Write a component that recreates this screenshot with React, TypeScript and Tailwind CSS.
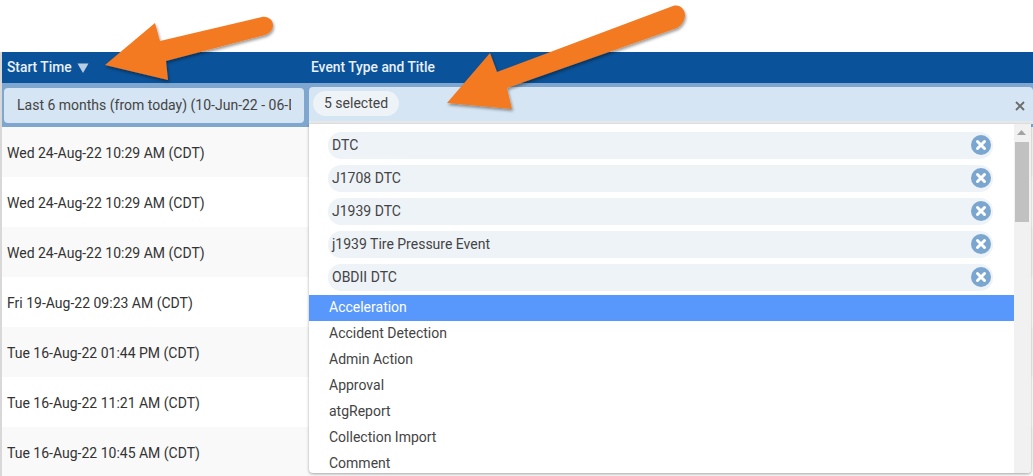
import React from 'react';

const rows = [
  'Wed 24-Aug-22 10:29 AM (CDT)',
  'Wed 24-Aug-22 10:29 AM (CDT)',
  'Wed 24-Aug-22 10:29 AM (CDT)',
  'Fri 19-Aug-22 09:23 AM (CDT)',
  'Tue 16-Aug-22 01:44 PM (CDT)',
  'Tue 16-Aug-22 11:21 AM (CDT)',
  'Tue 16-Aug-22 10:45 AM (CDT)',
];

const selected = ['DTC', 'J1708 DTC', 'J1939 DTC', 'j1939 Tire Pressure Event', 'OBDII DTC'];
const options = ['Accident Detection', 'Admin Action', 'Approval', 'atgReport', 'Collection Import', 'Comment'];

const Chip: React.FC<{ label: string }> = ({ label }) => (
  <div className="mb-[6px] flex h-[27px] items-center justify-between rounded-[13px] bg-[#eef3f8] pl-[4px] pr-[2px]">
    <span className="text-[14px] text-[#444]">{label}</span>
    <svg className="-mt-[2px]" width="20" height="20" viewBox="0 0 20 20">
      <circle cx="10" cy="10" r="10" fill="#7ba6cf" />
      <path d="M6.5 6.5l7 7M13.5 6.5l-7 7" stroke="#fff" strokeWidth="3" strokeLinecap="round" />
    </svg>
  </div>
);

const App: React.FC = () => {
  return (
    <div className="relative h-[476px] w-[1033px] overflow-hidden bg-white font-['Roboto',sans-serif]">
      <div className="h-[52px]" />
      <div className="flex h-[424px] border-l-2 border-[#d8d8d8]">
        <div className="w-full">
          <div className="flex h-[31px] items-center bg-[#0a5299] text-[13.8px] font-medium text-[#e8f0f8]">
            <div className="flex w-[309px] items-center pl-[5px]">
              Start Time
              <svg className="ml-[5px]" width="12" height="10" viewBox="0 0 12 10">
                <path d="M0.5 0.5h11L6 10z" fill="#b9cde2" />
              </svg>
            </div>
            <div>Event Type and Title</div>
          </div>

          <div className="flex h-[44px] bg-[#7fa6cf]">
            <div className="w-[307px] pl-[2px] pr-[5px] pt-[5px]">
              <div className="flex h-[35px] items-center overflow-hidden whitespace-nowrap rounded-[4px] bg-[#d5e5f3] pl-[13px] pr-[13px] text-[14px] text-[#444]">
                <span className="w-full overflow-hidden">Last 6 months (from today) (10-Jun-22 - 06-Dec-22)</span>
              </div>
            </div>
            <div className="mt-[4px] flex h-[37px] flex-1 items-center justify-between rounded-t-[4px] border-b-[3px] border-[#e6e8ea] bg-[#d5e5f3] pl-[4px] pr-[8px]">
              <span className="-mt-[1px] flex h-[25px] items-center rounded-full bg-[#eef3f8] px-[11px] text-[14px] text-[#444]">5 selected</span>
              <svg className="mt-[3px]" width="10" height="10" viewBox="0 0 10 10">
                <path d="M1 1l8 8M9 1l-8 8" stroke="#6b6b6b" strokeWidth="1.8" />
              </svg>
            </div>
          </div>

          {rows.map((row, i) => (
            <div
              key={i}
              className={`flex h-[50px] items-center pl-[5px] pt-[2px] text-[14px] text-[#333] ${i % 2 === 0 ? 'bg-[#f9f9f9]' : 'bg-white'}`}
            >
              {row}
            </div>
          ))}
        </div>
      </div>

      {/* dropdown list over the table */}
      <div className="absolute left-[309px] top-[124px] flex h-[349px] w-[722px] overflow-hidden rounded-b-[4px] bg-white shadow-[0_1px_3px_rgba(0,0,0,0.35)]">
        <div className="flex-1 overflow-hidden">
          <div className="pl-[19px] pr-[21px] pt-[8px]">
            {selected.map((s) => (
              <Chip key={s} label={s} />
            ))}
          </div>
          <div className="-mt-[2px] flex h-[26px] items-center bg-[#5897fb] pb-[2px] pl-[20px] text-[14px] text-white">Acceleration</div>
          {options.map((o) => (
            <div key={o} className="flex h-[26px] items-center pb-[2px] pl-[20px] text-[14px] text-[#444]">
              {o}
            </div>
          ))}
        </div>
        <div className="w-[17px] bg-[#f1f1f1]">
          <svg className="ml-[3px] mt-[6px]" width="9" height="5" viewBox="0 0 9 5">
            <path d="M4.5 0L9 5H0z" fill="#a3a3a3" />
          </svg>
          <div className="ml-[1px] mr-[2px] mt-[7px] h-[80px] bg-[#c1c1c1]" />
        </div>
      </div>

      {/* annotation arrows */}
      <svg className="absolute left-0 top-0" width="1033" height="130" viewBox="0 0 1033 130">
        <defs>
          <filter id="arrowShadow" x="-10%" y="-10%" width="120%" height="130%">
            <feDropShadow dx="1" dy="2" stdDeviation="1.5" floodColor="#000" floodOpacity="0.4" />
          </filter>
        </defs>
        <g filter="url(#arrowShadow)" fill="#f47a20">
          <path d="M105 65L155 23L160 41L262 17C268 16 273 20 273 25C273 30 270 33 265 35L166 61L168 80Z" />
          <path d="M447 103L490 53L497 72L673 6C680 4 685 10 685 15C685 20 682 25 677 28L507 88L512 109Z" />
        </g>
      </svg>
    </div>
  );
};

export default App;
